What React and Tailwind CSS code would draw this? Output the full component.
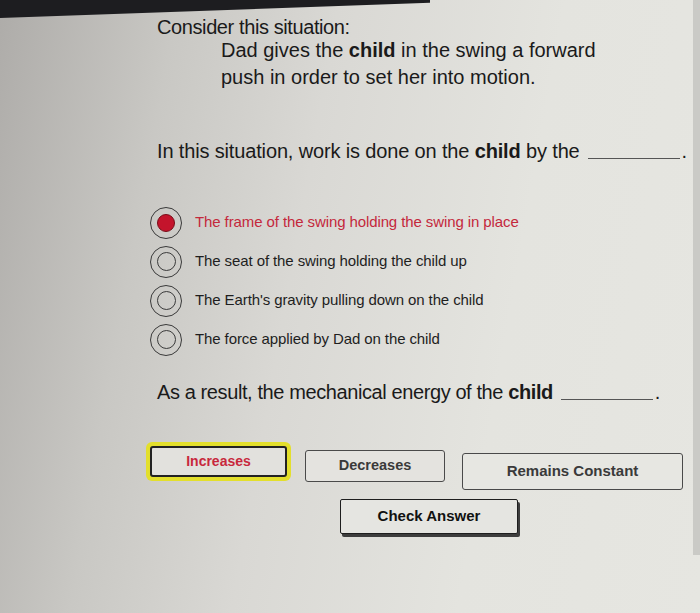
import React from 'react';

const options = [
    'The frame of the swing holding the swing in place',
    'The seat of the swing holding the child up',
    "The Earth's gravity pulling down on the child",
    'The force applied by Dad on the child',
];

const Radio = ({ checked }) => (
    <div className="w-[32px] h-[32px] rounded-full border border-[#3a3a3a] flex items-center justify-center shrink-0">
        <div
            className={
                checked
                    ? 'w-[18px] h-[18px] rounded-full bg-[#c4142c] border border-[#7a0d18]'
                    : 'w-[19px] h-[19px] rounded-full border border-[#3a3a3a]'
            }
        />
    </div>
);

const Blank = () => (
    <span className="inline-flex items-end ml-[8px]">
        <span className="inline-block border-b border-[#555] w-[92px] mb-[6px]" />
        <span className="ml-[2px]">.</span>
    </span>
);

export default function App() {
    return (
        <div
            className="w-[700px] h-[613px] overflow-hidden flex bg-[linear-gradient(100deg,#aeaca9_0%,#c9c8c4_22%,#d9d8d4_42%,#e4e4df_70%,#e6e6e1_100%)] text-[#1a1a1a]"
            style={{ fontFamily: '"Liberation Sans", Arial, sans-serif' }}
        >
            <div className="flex-1 flex flex-col">
                {/* dark edge of the window above */}
                <div className="h-[18px] w-[430px] bg-[#1d1d20] [clip-path:polygon(0_0,100%_0,100%_15%,0_100%)]" />

                <p className="ml-[157px] -mt-[2px] text-[20px] leading-[22px] tracking-[-0.4px]">Consider this situation:</p>

                <p className="ml-[221px] -mt-[1px] text-[20px] leading-[27px]">
                    Dad gives the <b>child</b> in the swing a forward
                    <br />
                    push in order to set her into motion.
                </p>

                <p className="ml-[157px] mt-[46px] text-[20px] leading-[28px] tracking-[-0.15px] flex items-end">
                    <span>
                        In this situation, work is done on the <b>child</b> by the
                    </span>
                    <Blank />
                </p>

                <div className="mt-[38px] ml-[150px] flex flex-col">
                    {options.map((opt, i) => (
                        <div key={opt} className="h-[39px] flex items-center">
                            <Radio checked={i === 0} />
                            <span
                                className={`ml-[13px] text-[15px] tracking-[-0.1px] ${
                                    i === 0 ? 'text-[#c4283c]' : 'text-[#1e1e1e]'
                                }`}
                            >
                                {opt}
                            </span>
                        </div>
                    ))}
                </div>

                <p className="ml-[157px] mt-[19px] text-[20px] leading-[28px] tracking-[-0.4px] flex items-end">
                    <span>
                        As a result, the mechanical energy of the <b>child</b>
                    </span>
                    <Blank />
                </p>

                <div className="mt-[36px] ml-[146px] flex items-start">
                    <div className="w-[145px] h-[39px] rounded-[6px] bg-[#e3df2c] p-[4px]">
                        <button className="w-full h-full rounded-[3px] border-2 border-[#222] bg-[#e2e1dd] text-[14px] font-bold text-[#c8283c]">
                            Increases
                        </button>
                    </div>
                    <button className="ml-[14px] mt-[8px] w-[140px] h-[32px] rounded-[3px] border-[1.5px] border-[#4a4a4a] bg-[#e4e3df] text-[14.5px] font-bold text-[#3a3a3a]">
                        Decreases
                    </button>
                    <button className="ml-[17px] mt-[11px] w-[221px] h-[37px] rounded-[3px] border-[1.5px] border-[#4a4a4a] bg-[#e7e7e2] text-[15px] font-bold text-[#3a3a3a]">
                        Remains Constant
                    </button>
                </div>

                <div className="mt-[9px] ml-[340px]">
                    <button className="w-[178px] h-[35px] rounded-[2px] border-[1.5px] border-[#1e1e1e] bg-[#e5e5e1] shadow-[2px_3px_0_#3d3d3d] text-[15px] font-bold text-[#111]">
                        Check Answer
                    </button>
                </div>
            </div>
            <div className="w-[7px] h-[555px] bg-[#cacac6] shrink-0" />
        </div>
    );
}
